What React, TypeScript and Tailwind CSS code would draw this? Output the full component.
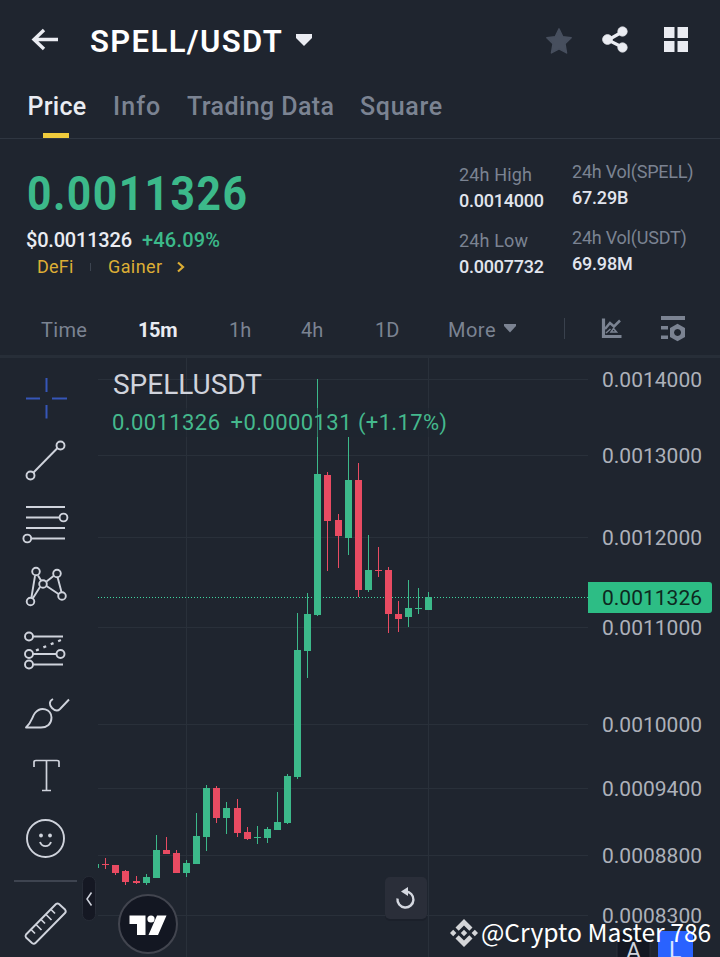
import React from "react";

type Candle = [x: number, top: number, bottom: number, high: number, low: number, up: 0 | 1];

// x centre, body top, body bottom, wick top, wick bottom, direction
const CANDLES: Candle[] = [
  [105, 864, 865, 858, 869, 0],
  [115, 865, 873, 865, 875, 0],
  [125, 871, 882, 870, 885, 0],
  [136, 881, 883, 876, 884, 0],
  [146, 877, 883, 874, 885, 1],
  [156, 850, 878, 835, 878, 1],
  [166, 850, 854, 837, 854, 0],
  [176, 853, 873, 850, 873, 0],
  [186, 863, 873, 860, 877, 1],
  [196, 836, 864, 813, 864, 1],
  [206, 788, 837, 785, 851, 1],
  [216, 788, 818, 786, 823, 0],
  [226, 808, 818, 802, 834, 1],
  [237, 808, 833, 799, 837, 0],
  [247, 832, 839, 827, 840, 0],
  [257, 837, 838, 826, 844, 1],
  [267, 829, 838, 827, 843, 1],
  [277, 822, 830, 792, 830, 1],
  [287, 776, 823, 774, 824, 1],
  [297, 650, 777, 613, 779, 1],
  [307, 614, 651, 593, 678, 1],
  [317, 474, 615, 379, 616, 1],
  [327, 475, 521, 472, 571, 0],
  [338, 520, 536, 514, 568, 0],
  [348, 480, 538, 437, 555, 1],
  [358, 480, 590, 463, 597, 0],
  [368, 570, 590, 535, 592, 1],
  [378, 570, 571, 547, 577, 0],
  [388, 570, 614, 567, 633, 0],
  [398, 614, 619, 601, 632, 0],
  [408, 608, 617, 580, 627, 1],
  [418, 608, 609, 588, 614, 1],
  [428, 597, 610, 592, 610, 1],
];

const LEVELS: [number, string][] = [
  [379, "0.0014000"],
  [455, "0.0013000"],
  [537, "0.0012000"],
  [627, "0.0011000"],
  [724, "0.0010000"],
  [788, "0.0009400"],
  [855, "0.0008800"],
  [915, "0.0008300"],
];

const GREEN = "#3cb98a";
const RED = "#e94b62";

function Header() {
  return (
    <header className="flex h-[82px] items-center pl-[31px] pr-[31px] pb-[2px]">
      <svg width="28" height="24" viewBox="0 0 28 24" className="shrink-0" fill="none" stroke="#eaecf2" strokeWidth="3.4">
        <path d="M27 11.500H4M13 2L3 11.500L13 21" />
      </svg>
      <h1 className="ml-[31px] mt-[2px] w-[193px] whitespace-nowrap text-[31px] font-semibold leading-none tracking-[1.4px] text-white">SPELL/USDT</h1>
      <svg width="18" height="14" viewBox="0 0 18 14" className="ml-3 shrink-0" fill="#eaecf2">
        <path d="M1 1H17V5L9 13L1 5Z" />
      </svg>
      <div className="ml-auto flex items-center">
        <svg width="28" height="28" viewBox="0 0 28 28" className="mt-[1px]" fill="#474f5e" stroke="#474f5e" strokeWidth="1.4" strokeLinejoin="round">
          <path d="M14 1.800L17.700 9.600L26.200 10.700L20 16.700L21.600 26L14 21.800L6.400 26L8 16.700L1.800 10.700L10.300 9.600Z" />
        </svg>
        <svg width="28" height="28" viewBox="0 0 28 28" className="ml-7" fill="#eaecf2" stroke="#eaecf2">
          <path d="M22 5.500L7 14L22 21.500" fill="none" strokeWidth="3.2" />
          <circle cx="21.500" cy="5.500" r="4.600" />
          <circle cx="6.500" cy="13.500" r="4.800" />
          <circle cx="21.500" cy="21.500" r="4.600" />
        </svg>
        <svg width="26" height="26" viewBox="0 0 26 26" className="ml-[34px]" fill="#eaecf2">
          <path d="M1 0H11.500V11H1ZM14.500 0H25V11H14.500ZM1 14H11.500V25H1ZM14.500 14H25V25H14.500Z" />
        </svg>
      </div>
    </header>
  );
}

function Tabs() {
  return (
    <nav className="flex h-[57px] items-stretch border-b border-[#2f3641] pl-[27px] text-[25px] font-medium leading-[50px] text-[#7b8392]">
      <div className="flex w-[60px] flex-col items-center text-[#eaecf2]">
        <span className="h-[51px] tracking-[0.3px]">Price</span>
        <span className="-ml-[2px] h-[5px] w-[26px] bg-[#f0cb3c]" />
      </div>
      <span className="ml-[26px] w-[48px] tracking-[1.1px]">Info</span>
      <span className="ml-[26px] w-[147px] whitespace-nowrap tracking-[0.4px]">Trading Data</span>
      <span className="ml-[26px] tracking-[0.7px]">Square</span>
    </nav>
  );
}

function Stat({ label, value, dense }: { label: string; value: string; dense?: boolean }) {
  return (
    <div className="flex h-[66px] flex-col whitespace-nowrap">
      <span className={`text-[18px] leading-[26px] text-[#7b8392] ${dense ? "tracking-[-0.22px]" : "tracking-[0.15px]"}`}>{label}</span>
      <span className={`text-[18px] font-medium leading-[26px] text-[#e2e5ee] ${dense ? "tracking-[-0.2px]" : "tracking-[-0.22px]"}`}>{value}</span>
    </div>
  );
}

function Summary() {
  return (
    <section className="flex h-[163px]">
      <div className="flex w-[459px] flex-col pl-[27px] pt-[29px]">
        <span className="w-[260px] origin-left scale-x-[0.87] text-[49px] font-bold leading-[52px] tracking-[1.7px] text-[#3cb98a]">0.0011326</span>
        <div className="-ml-px mt-[7px] flex text-[20px] font-medium leading-[26px]">
          <span className="w-[116px] tracking-[-0.2px] text-[#eaecf2]">$0.0011326</span>
          <span className="tracking-[0.2px] text-[#3cb98a]">+46.09%</span>
        </div>
        <div className="mt-px flex items-center pl-[10px] text-[18px] leading-[26px] text-[#dcae35]">
          <span className="w-[53px] tracking-[0.2px]">DeFi</span>
          <span className="h-2 w-px bg-[#3c4450]" />
          <span className="ml-[17px] w-[68px] tracking-[0.4px]">Gainer</span>
          <svg width="10" height="12" viewBox="0 0 10 12" fill="none" stroke="#dcae35" strokeWidth="2.2">
            <path d="M2 1.500L7 6L2 10.500" />
          </svg>
        </div>
      </div>
      <div className="w-[113px] pt-[23px]">
        <Stat label="24h High" value="0.0014000" />
        <Stat label="24h Low" value="0.0007732" />
      </div>
      <div className="pt-[20px]">
        <Stat label="24h Vol(SPELL)" value="67.29B" dense />
        <Stat label="24h Vol(USDT)" value="69.98M" dense />
      </div>
    </section>
  );
}

function Timeframes() {
  return (
    <div className="flex h-[56px] items-center border-b-[3px] border-[#272e38] pl-[41px] pt-[2px] text-[20px] leading-none text-[#7b8392]">
      <span className="w-[97px] tracking-[0.3px]">Time</span>
      <span className="w-[91px] font-bold tracking-[-0.4px] text-[#eaecf2]">15m</span>
      <span className="w-[72px]">1h</span>
      <span className="w-[74px]">4h</span>
      <span className="w-[73px]">1D</span>
      <span className="w-[56px] tracking-[0.5px]">More</span>
      <svg width="12" height="9" viewBox="0 0 12 9" className="-mt-[3px]" fill="#7b8392"><path d="M0 0H12V2L6 8.500L0 2Z" /></svg>
      <span className="-mt-[2px] ml-[48px] h-[21px] w-px bg-[#39414d]" />
      <svg width="22" height="21" viewBox="0 0 22 21" className="-mt-[2px] ml-[36px]" fill="none" stroke="#7b8392">
        <path d="M2.500 0.500V18.500H20.500" strokeWidth="3.200" />
        <path d="M4 11L9 5L13 8.500L19 2.500" strokeWidth="2.500" />
        <path d="M5 15L9.500 11M10 14H15.500L12.500 10.500Z" strokeWidth="1.500" />
      </svg>
      <svg width="26" height="27" viewBox="0 0 26 27" className="-mt-[2px] ml-[37px]" fill="#7b8392">
        <path d="M1 1H25V5H1ZM1 11H8V14.500H1ZM1 20.500H8V24H1Z" />
        <path fillRule="evenodd" d="M17.500 8.800L25 13V22L17.500 26.200L10 22V13ZM17.500 14A3.500 3.500 0 1 0 17.600 14Z" />
      </svg>
    </div>
  );
}

function Toolbar() {
  return (
    <aside className="flex w-[97px] shrink-0 flex-col">
      <svg width="97" height="599" viewBox="0 358 97 599" fill="none" stroke="#cfd3dc" strokeWidth="1.9" strokeLinejoin="round">
        <path d="M46.500 378V392M46.500 405V418.500M26 398.500H40M52 398.500H67" stroke="#3656b8" strokeWidth="2" />
        <path d="M33.500 472.500L57.500 448" />
        <circle cx="30.500" cy="475.500" r="4" />
        <circle cx="60.500" cy="445.500" r="4" />
        <path d="M26 507H65M26 517.500H60M26 528H65M31 538.500H65" />
        <circle cx="63.500" cy="517.500" r="3.900" />
        <circle cx="27.300" cy="538.500" r="3.900" />
        <path d="M35 576L31.500 597M38 575.500L41 580.500M46.500 581.500L53.500 576M46.500 586L58.500 594M40 587L33 598M57.500 577L61.500 592" />
        <circle cx="36" cy="571.500" r="3.800" />
        <circle cx="43" cy="584" r="3.800" />
        <circle cx="57" cy="573.500" r="3.800" />
        <circle cx="62" cy="596" r="3.800" />
        <circle cx="30.500" cy="601.500" r="3.800" />
        <path d="M33 636.500H63M33 654H56M33 664.500H63" />
        <path d="M36 650.500L61 640" strokeDasharray="3 5" strokeWidth="2.300" />
        <circle cx="29" cy="636.500" r="4" />
        <circle cx="29" cy="654" r="4" />
        <circle cx="29" cy="664.500" r="4" />
        <circle cx="60.500" cy="654" r="4" />
        <path d="M26 727.500C32 722 32 717 35 713C41 706 51 709 51.500 717.500C51.500 724 47 727.500 41 727.500Z" />
        <path d="M53 699C49 701 49 705 52 708C55 711 58 711 60 709L69 699.500" />
        <path d="M34 767V762Q34 760.500 36 760.500H57Q59 760.500 59 762V767M46.500 760.500V790.500M42 790.500H51" strokeWidth="1.700" />
        <circle cx="45.500" cy="838.500" r="18.500" />
        <path d="M40 842C42 847.500 49 847.500 51 842" />
        <circle cx="41" cy="835.500" r="1.900" fill="#cfd3dc" stroke="none" />
        <circle cx="50" cy="835.500" r="1.900" fill="#cfd3dc" stroke="none" />
        <path d="M14 881H77" stroke="#3e4450" />
        <path d="M26 934.500Q25 936 26 937.500L32 943Q34 944.500 35.500 943L65 913Q66.500 911.500 65 909.500L59 904Q57.500 903 56 904Z" />
        <path d="M31 929.500L35 933.500M36 924.500L41.500 930M41 919.500L45 923.500M46 914.500L51.500 920M51 909.500L55 913.500" strokeWidth="1.700" />
        <rect x="82.500" y="876.500" width="13" height="44" rx="6" fill="#151823" stroke="#272c37" strokeWidth="1" />
        <path d="M91.500 892.500L87 899L91.500 905.500" strokeWidth="1.500" />
      </svg>
    </aside>
  );
}

function Chart() {
  return (
    <svg width="623" height="599" viewBox="97 358 623 599" className="shrink-0" fontFamily="Roboto, sans-serif">
      <g fill="#29303a">
        {LEVELS.map(([y]) => (
          <rect key={y} x="98" y={y} width="490" height="1" />
        ))}
        <rect x="186" y="358" width="1" height="599" />
        <rect x="428" y="358" width="1" height="599" />
      </g>
      <path d="M98 597.500H588" stroke="#3fd6a0" strokeWidth="1" strokeDasharray="1 2" />
      <rect x="98" y="864" width="1" height="4" fill={GREEN} />
      {CANDLES.map(([x, top, bottom, high, low, up]) => (
        <g key={x} fill={up ? GREEN : RED}>
          <rect x={x} y={high} width="1" height={low - high} />
          <rect x={x - 3} y={top} width="7" height={bottom - top} />
        </g>
      ))}
      <rect x="110" y="408" width="338" height="29" fill="#1f252f" opacity="0.4" />
      <text x="113" y="394" fontSize="28" fill="#d0d3dc" textLength="149">SPELLUSDT</text>
      <g fontSize="22" fill="#45b98d">
        <text x="112" y="430" textLength="108">0.0011326</text>
        <text x="230.500" y="430" textLength="121">+0.0000131</text>
        <text x="358" y="430" textLength="89">(+1.17%)</text>
      </g>
      <g fontSize="21" fill="#adb1ba">
        {LEVELS.map(([y, label]) => (
          <text key={label} x="602" y={y + 8} textLength="100">{label}</text>
        ))}
      </g>
      <path d="M588 582H709Q712 582 712 585V610Q712 613 709 613H588Z" fill="#2dbd85" />
      <text x="602" y="605" fontSize="21" fill="#0d281f" textLength="100">0.0011326</text>
      <circle cx="148" cy="924" r="29" fill="#131722" stroke="#42454f" strokeWidth="2" />
      <path d="M129.500 915.500H145.500V935H137V924H129.500ZM157 915.500H166.500L158 935H148.500Z" fill="#fff" />
      <circle cx="151" cy="919" r="3.600" fill="#fff" />
      <rect x="385" y="880" width="42" height="41" rx="5" fill="#171c25" opacity="0.5" />
      <rect x="385" y="877" width="42" height="42" rx="5" fill="#2a2e39" />
      <path d="M397.500 898.500A8 8 0 1 0 405.500 891.500" fill="none" stroke="#d5d8e0" strokeWidth="2.400" />
      <path d="M401 891.500L408 887V896Z" fill="#d5d8e0" />
      <rect x="617" y="931" width="33" height="30" fill="#131722" stroke="#2a2e39" />
      <rect x="658" y="931" width="35" height="30" rx="2" fill="#2962ff" />
      <text x="626" y="959" fontSize="23" fill="#d0d3dc">A</text>
      <text x="669" y="958" fontSize="23" fill="#d8e4ff">L</text>
    </svg>
  );
}

function Watermark() {
  return (
    <div className="absolute left-[450px] top-[919px] flex h-[28px] items-center whitespace-nowrap">
      <svg width="28" height="28" viewBox="0 0 28 28" fill="#d4d5d8">
        <path d="M14 0L22.500 8.500L19.300 11.700L14 6.400L8.700 11.700L5.500 8.500Z" />
        <path d="M14 28L22.500 19.500L19.300 16.300L14 21.600L8.700 16.300L5.500 19.500Z" />
        <path d="M3.200 10.800L6.400 14L3.200 17.200L0 14ZM24.800 10.800L28 14L24.800 17.200L21.600 14ZM14 10.800L17.200 14L14 17.200L10.800 14Z" />
      </svg>
      <span className="-mt-[3px] ml-[3px] font-['Noto_Sans_CJK_SC','Noto_Sans',sans-serif] text-[24.7px] leading-none text-white">@Crypto Master 786</span>
    </div>
  );
}

export default function App() {
  return (
    <main className="relative flex h-[957px] w-[720px] flex-col overflow-hidden bg-[#1f252f] font-['Roboto',sans-serif]">
      <Header />
      <Tabs />
      <Summary />
      <Timeframes />
      <div className="flex h-[599px]">
        <Toolbar />
        <Chart />
      </div>
      <Watermark />
    </main>
  );
}
